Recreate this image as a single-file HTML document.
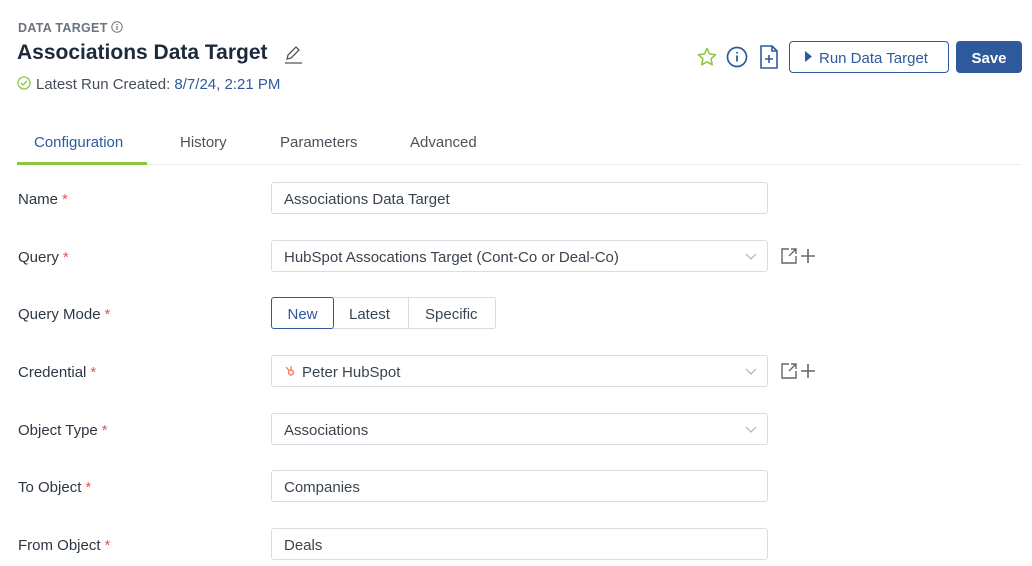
<!DOCTYPE html>
<html><head><style>
*{box-sizing:border-box;margin:0;padding:0}
body{width:1032px;height:566px;overflow:hidden;background:#fff;font-family:"Liberation Sans",sans-serif;color:#33404d;position:relative}
.abs{position:absolute}
.lbl{position:absolute;left:18px;font-size:15px;color:#2d3742}
.lbl i{font-style:normal;color:#e05a5a;margin-left:4px}
.inp{position:absolute;left:271px;width:497px;height:32px;border:1px solid #d9dde2;border-radius:3px;font-size:15px;color:#3a444f;padding-left:12px;line-height:33px}
.chev{position:absolute;right:10px;top:9px}
.ic{position:absolute;left:780px}
</style></head><body>
<div class="abs" style="left:18px;top:21px;font-size:12.5px;font-weight:bold;color:#6b737b;letter-spacing:.3px">DATA TARGET <svg width="12" height="12" viewBox="0 0 12 12" style="vertical-align:-1px"><circle cx="6" cy="6" r="5.2" fill="none" stroke="#6b737b" stroke-width="1"/><path d="M6 5v4M6 3v1" stroke="#6b737b" stroke-width="1.2"/></svg></div>
<div class="abs" style="left:17px;top:41px;font-size:21px;font-weight:bold;color:#1c2a3a">Associations Data Target</div>
<svg class="abs" style="left:283px;top:44px" width="20" height="20" viewBox="0 0 20 20"><path d="M4 15l1-4 8-8 3 3-8 8z" fill="none" stroke="#555" stroke-width="1.3"/><path d="M2 19h17" stroke="#555" stroke-width="1.3"/></svg>
<svg class="abs" style="left:17px;top:76px" width="14" height="14" viewBox="0 0 14 14"><circle cx="7" cy="7" r="6" fill="none" stroke="#8cc63f" stroke-width="1.3"/><path d="M4 7l2 2 4-4" fill="none" stroke="#8cc63f" stroke-width="1.3"/></svg>
<div class="abs" style="left:36px;top:76px;font-size:15px;color:#444d57">Latest Run Created: <span style="color:#2e5a9c">8/7/24, 2:21 PM</span></div>
<svg class="abs" style="left:697px;top:47px" width="20" height="20" viewBox="0 0 20 20"><path d="M10 1.5l2.6 5.5 6 .7-4.5 4.1 1.2 6-5.3-3-5.3 3 1.2-6L1.4 7.7l6-.7z" fill="none" stroke="#8cc63f" stroke-width="1.5" stroke-linejoin="round"/></svg>
<svg class="abs" style="left:726px;top:46px" width="22" height="22" viewBox="0 0 22 22"><circle cx="11" cy="11" r="9.5" fill="none" stroke="#2e5a9c" stroke-width="1.7"/><path d="M11 9.5v6M11 6v1.5" stroke="#2e5a9c" stroke-width="1.8"/></svg>
<svg class="abs" style="left:759px;top:45px" width="20" height="24" viewBox="0 0 20 24"><path d="M2 1h11l5 5v17H2z" fill="none" stroke="#2e5a9c" stroke-width="1.6" stroke-linejoin="round"/><path d="M13 1v5h5M10 10v8M6 14h8" fill="none" stroke="#2e5a9c" stroke-width="1.6"/></svg>
<div class="abs" style="left:789px;top:41px;width:160px;height:32px;border:1px solid #2e5a9c;border-radius:4px;color:#2e5a9c;font-size:15px;line-height:33px;padding-left:29px">Run Data Target</div>
<svg class="abs" style="left:805px;top:51px" width="8" height="11"><path d="M0 0l7 5.5L0 11z" fill="#2e5a9c"/></svg>
<div class="abs" style="left:956px;top:41px;width:66px;height:32px;background:#2e5a9c;border-radius:4px;color:#fff;font-size:15px;font-weight:bold;line-height:35px;text-align:center">Save</div>
<div class="abs" style="left:17px;top:164px;width:1004px;height:1px;background:#eceef0"></div>
<div class="abs" style="left:17px;top:162px;width:130px;height:3px;background:#8cc63f"></div>
<div class="abs" style="left:34px;top:134px;font-size:15px;color:#2e5a9c">Configuration</div>
<div class="abs" style="left:180px;top:134px;font-size:15px;color:#4a535c">History</div>
<div class="abs" style="left:280px;top:134px;font-size:15px;color:#4a535c">Parameters</div>
<div class="abs" style="left:410px;top:134px;font-size:15px;color:#4a535c">Advanced</div>

<div class="lbl" style="top:191px">Name<i>*</i></div>
<div class="inp" style="top:182px">Associations Data Target</div>
<div class="lbl" style="top:249px">Query<i>*</i></div>
<div class="inp" style="top:240px">HubSpot Assocations Target (Cont-Co or Deal-Co)<svg class="chev" width="12" height="12"><path d="M1 4l5 5 5-5" fill="none" stroke="#aaa"/></svg></div>
<svg class="ic" style="top:247px" width="38" height="18"><path d="M9 2H2v14h14V9M11 2h5v5M16 2l-7 7" fill="none" stroke="#666" stroke-width="1.4"/><path d="M28 2v14M21 9h14" stroke="#666" stroke-width="1.6"/></svg>
<div class="lbl" style="top:306px">Query Mode<i>*</i></div>
<div class="abs" style="left:271px;top:297px;width:225px;height:32px;border:1px solid #d9dde2;border-radius:3px"></div>
<div class="abs" style="left:408px;top:297px;width:1px;height:32px;background:#d9dde2"></div>
<div class="abs" style="left:271px;top:297px;width:63px;height:32px;border:1px solid #2e5a9c;border-radius:3px;color:#2e5a9c;font-size:15px;line-height:33px;text-align:center">New</div>
<div class="abs" style="left:349px;top:306px;font-size:15px;color:#3a444f">Latest</div>
<div class="abs" style="left:425px;top:306px;font-size:15px;color:#3a444f">Specific</div>
<div class="lbl" style="top:364px">Credential<i>*</i></div>
<div class="inp" style="top:355px;padding-left:30px">Peter HubSpot<svg class="chev" width="12" height="12"><path d="M1 4l5 5 5-5" fill="none" stroke="#aaa"/></svg></div>
<svg class="abs" style="left:284px;top:365px" width="12" height="12"><circle cx="7" cy="7.5" r="2.5" fill="none" stroke="#ff7a59" stroke-width="1.4"/><path d="M5 5.5L2 2M7 5V1" stroke="#ff7a59" stroke-width="1.3"/></svg>
<svg class="ic" style="top:362px" width="38" height="18"><path d="M9 2H2v14h14V9M11 2h5v5M16 2l-7 7" fill="none" stroke="#666" stroke-width="1.4"/><path d="M28 2v14M21 9h14" stroke="#666" stroke-width="1.6"/></svg>
<div class="lbl" style="top:422px">Object Type<i>*</i></div>
<div class="inp" style="top:413px">Associations<svg class="chev" width="12" height="12"><path d="M1 4l5 5 5-5" fill="none" stroke="#aaa"/></svg></div>
<div class="lbl" style="top:479px">To Object<i>*</i></div>
<div class="inp" style="top:470px">Companies</div>
<div class="lbl" style="top:537px">From Object<i>*</i></div>
<div class="inp" style="top:528px">Deals</div>
</body></html>
